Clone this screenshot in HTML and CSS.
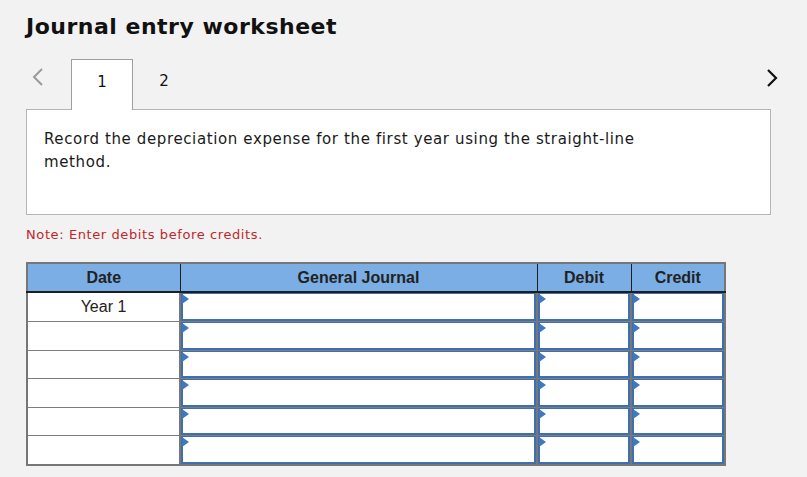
FILE: index.html
```html
<!DOCTYPE html>
<html>
<head>
<meta charset="utf-8">
<link rel="stylesheet" href="styles.css">
</head>
<body>
<div class="page">
  <h1 class="title">Journal entry worksheet</h1>
  <div class="tabs">
    <span class="nav prev">
      <svg width="14" height="20" viewBox="0 0 14 20"><path d="M11 2 L3 10 L11 18" fill="none" stroke="#9a9a9a" stroke-width="2"/></svg>
    </span>
    <span class="tab active">1</span>
    <span class="tab">2</span>
    <span class="nav next">
      <svg width="14" height="20" viewBox="0 0 14 20"><path d="M3 2 L11 10 L3 18" fill="none" stroke="#111" stroke-width="2.2"/></svg>
    </span>
  </div>
  <div class="panel">
    <p class="prompt">Record the depreciation expense for the first year using the straight-line method.</p>
  </div>
  <p class="note">Note: Enter debits before credits.</p>
  <table class="journal">
    <colgroup>
      <col class="c-date"><col class="c-gj"><col class="c-amt"><col class="c-amt">
    </colgroup>
    <thead>
      <tr><th>Date</th><th>General Journal</th><th>Debit</th><th>Credit</th></tr>
    </thead>
    <tbody>
      <tr><td class="date">Year 1</td><td class="in"><div class="box"></div></td><td class="in"><div class="box"></div></td><td class="in"><div class="box"></div></td></tr>
      <tr><td class="date"></td><td class="in"><div class="box"></div></td><td class="in"><div class="box"></div></td><td class="in"><div class="box"></div></td></tr>
      <tr><td class="date"></td><td class="in"><div class="box"></div></td><td class="in"><div class="box"></div></td><td class="in"><div class="box"></div></td></tr>
      <tr><td class="date"></td><td class="in"><div class="box"></div></td><td class="in"><div class="box"></div></td><td class="in"><div class="box"></div></td></tr>
      <tr><td class="date"></td><td class="in"><div class="box"></div></td><td class="in"><div class="box"></div></td><td class="in"><div class="box"></div></td></tr>
      <tr><td class="date"></td><td class="in"><div class="box"></div></td><td class="in"><div class="box"></div></td><td class="in"><div class="box"></div></td></tr>
    </tbody>
  </table>
</div>
</body>
</html>
```

FILE: styles.css
```css
html, body {
  margin: 0;
  padding: 0;
  background: #f2f2f2;
}
.page {
  padding: 0 26px 0 26px;
  font-family: "DejaVu Sans", Verdana, sans-serif;
  color: #1a1a1a;
}
.title {
  margin: 0;
  padding-top: 13px;
  font-size: 22px;
  line-height: 28px;
  font-weight: bold;
  color: #111;
  letter-spacing: 0.5px;
}
.tabs {
  display: flex;
  align-items: stretch;
  height: 50px;
  margin-top: 18px;
}
.nav {
  display: flex;
  align-items: center;
}
.prev {
  width: 45px;
  padding-left: 5px;
  box-sizing: border-box;
  padding-bottom: 14px;
}
.next {
  margin-left: auto;
  margin-right: 2px;
  padding-bottom: 13px;
}
.tab {
  width: 62px;
  box-sizing: border-box;
  text-align: center;
  font-size: 15px;
  line-height: 18px;
  padding-top: 13px;
  color: #111;
}
.tab.active {
  background: #fff;
  border: 1px solid #9e9e9e;
  border-bottom: none;
  margin-bottom: -1px;
  height: 51px;
  position: relative;
  z-index: 1;
}
.panel {
  width: 745px;
  height: 106px;
  box-sizing: border-box;
  background: #fff;
  border: 1px solid #b5b5b5;
  padding: 18px 17px 0 17px;
}
.prompt {
  margin: 0;
  max-width: 640px;
  font-size: 15px;
  line-height: 23px;
  letter-spacing: 0.62px;
  color: #1a1a1a;
}
.note {
  margin: 11px 0 0 0;
  font-size: 13px;
  line-height: 18px;
  letter-spacing: 0.6px;
  color: #c0272d;
}
.journal {
  margin-top: 18px;
  border-collapse: collapse;
  table-layout: fixed;
  width: 697px;
  border: 2px solid #777;
  font-family: "Liberation Sans", Arial, sans-serif;
}
.c-date { width: 153px; }
.c-gj { width: 357px; }
.c-amt { width: 94px; }
.journal th {
  height: 29px;
  padding: 0;
  background: #7aaee4;
  color: #222;
  font-size: 16px;
  font-weight: bold;
  text-align: center;
  border-right: 1px solid #1e1e1e;
  border-bottom: 2px solid #1e1e1e;
  box-sizing: border-box;
}
.journal th:last-child {
  border-right: none;
}
.journal td {
  height: 28.5px;
  padding: 0;
  background: #fff;
  border: 1px solid #7e7e7e;
  box-sizing: border-box;
}
.journal td.date {
  text-align: center;
  vertical-align: top;
  font-size: 16px;
  line-height: 28px;
  color: #222;
}
.journal td.in {
  border-left: 2px solid #777;
  vertical-align: top;
}
.box {
  position: relative;
  height: 27.5px;
  box-sizing: border-box;
  border: 2px solid #3d6fb1;
  border-top-width: 1px;
  background: #fff;
}
.box::before {
  content: "";
  position: absolute;
  left: -1px;
  top: 0;
  width: 0;
  height: 0;
  border-top: 5px solid transparent;
  border-bottom: 5px solid transparent;
  border-left: 7px solid #3f78c2;
}
```
